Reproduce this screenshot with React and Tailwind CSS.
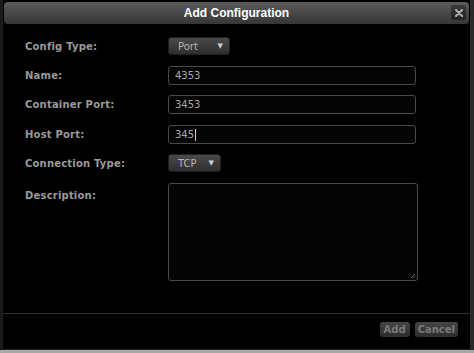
import React from 'react'

const font = { fontFamily: '"DejaVu Sans", Verdana, sans-serif' }

const Row = ({ label, children, top = false }) => (
  <div className={`flex ${top ? 'items-start' : 'items-center'}`}>
    <div className={`w-[165px] shrink-0 pl-[22px] text-[10px] font-bold text-[#9a9a9a] tracking-[0.2px] ${top ? 'pt-[5px]' : ''}`}>{label}</div>
    {children}
  </div>
)

const Select = ({ value, width }) => (
  <div className={`${width} h-[18px] flex items-center justify-between pl-[9px] pr-[6px] rounded-[3px] bg-gradient-to-b from-[#4a4a4a] to-[#2e2e2e] border border-[#1f1f1f] text-[10px] text-[#b5b5b5]`}>
    <span>{value}</span>
    <span className="text-[7px] text-[#cfcfcf]">▼</span>
  </div>
)

const Input = ({ value, caret }) => (
  <div className="w-[248px] h-[19px] flex items-center px-[6px] rounded-[3px] bg-[#050505] border border-[#4a4a4a] text-[10px] text-[#a9a9a9]">
    {value}
    {caret && <span className="ml-[1px] w-px h-[12px] bg-[#cfcfcf]" />}
  </div>
)

export default function App() {
  return (
    <div className="w-[474px] h-[353px] bg-[#a8a8a8]" style={font}>
      <div className="h-[350px] bg-black border-l-[3px] border-r-[4px] border-b-[1px] border-l-[#1b1b1b] border-r-[#2a2a2a] border-b-[#222] flex flex-col">
        <div className="mx-[1px] mt-[2px] h-[22px] rounded-[4px] bg-gradient-to-b from-[#5c5c5c] to-[#363636] relative flex items-center justify-center">
          <span className="text-[12px] font-bold text-white" style={{ fontFamily: '"Liberation Sans", Arial, sans-serif' }}>Add Configuration</span>
          <div className="absolute right-[3px] top-[3px] w-[15px] h-[15px] rounded-[2px] bg-gradient-to-b from-[#3a3a3a] to-[#222] flex items-center justify-center">
            <svg width="8" height="8" viewBox="0 0 8 8">
              <path d="M1 1 L7 7 M7 1 L1 7" stroke="#b0b0b0" strokeWidth="2" strokeLinecap="round" />
            </svg>
          </div>
        </div>
        <div className="flex flex-col pt-[13px]">
          <Row label="Config Type:"><Select value="Port" width="w-[62px]" /></Row>
          <div className="h-[11px]" />
          <Row label="Name:"><Input value="4353" /></Row>
          <div className="h-[10px]" />
          <Row label="Container Port:"><Input value="3453" /></Row>
          <div className="h-[11px]" />
          <Row label="Host Port:"><Input value="345" caret /></Row>
          <div className="h-[10px]" />
          <Row label="Connection Type:"><Select value="TCP" width="w-[53px]" /></Row>
          <div className="h-[11px]" />
          <Row label="Description:" top>
            <div className="w-[250px] h-[98px] rounded-[3px] bg-[#050505] border border-[#4a4a4a] relative">
              <svg className="absolute right-[1px] bottom-[1px]" width="6" height="6" viewBox="0 0 6 6">
                <path d="M5 1 L1 5 M5 3.5 L3.5 5" stroke="#888" strokeWidth="0.8" />
              </svg>
            </div>
          </Row>
        </div>
        <div className="mt-auto mb-[1px] h-[35px] border-t border-[#333] flex items-start justify-end gap-[5px] pr-[12px] pt-[8px]">
          <button className="h-[15px] px-[4px] rounded-[3px] bg-gradient-to-b from-[#464646] to-[#2c2c2c] text-[10px] font-bold text-[#7a7a7a] leading-none">Add</button>
          <button className="h-[15px] px-[3px] rounded-[3px] bg-gradient-to-b from-[#464646] to-[#2c2c2c] text-[10px] font-bold text-[#7a7a7a] leading-none">Cancel</button>
        </div>
      </div>
    </div>
  )
}
